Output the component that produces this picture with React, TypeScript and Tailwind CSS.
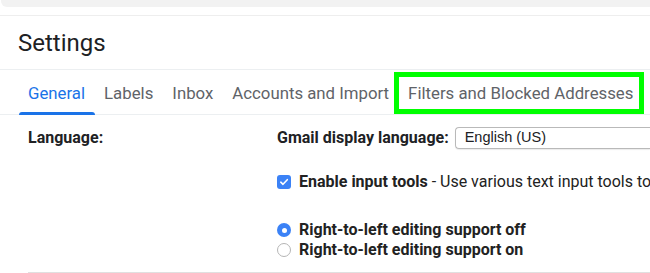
import React from "react";

export default function App() {
  const tabs = ["General", "Labels", "Inbox", "Accounts and Import"];
  return (
    <div className="w-[650px] h-[273px] overflow-hidden bg-white relative font-['Roboto',sans-serif] text-[#202124]">
      <div className="h-[7px] ml-[1px] bg-[#f2f2f2] rounded-bl-[6px]" />
      <div className="mt-[8px] border-t border-[#eeeeee]" />
      <div className="h-[53px] flex items-center pl-[18px] text-[24px] text-[#202124]">Settings</div>
      <div className="flex h-[46px] border-t border-b border-[#eceff1] pl-[18.5px] pt-[3px]">
        {tabs.map((t, i) => (
          <div
            key={t}
            className={
              "relative flex items-center px-[9.5px] text-[16.8px] " +
              (i === 0 ? "text-[#1a73e8]" : "text-[#5f6368]")
            }
          >
            {t}
            {i === 0 && (
              <div className="absolute left-0 right-0 bottom-[-1px] h-[3px] bg-[#1a73e8] rounded-t-[3px]" />
            )}
          </div>
        ))}
        <div className="relative flex items-center px-[9.5px] text-[16.8px] text-[#5f6368]">
          Filters and Blocked Addresses
          <div className="absolute left-[-5px] right-[-1.5px] top-[-1px] bottom-[0px] border-[5px] border-[#00ff00]" />
        </div>
      </div>
      <div className="flex mt-[12px]">
        <div className="w-[277px] shrink-0 pl-[28px] text-[16px] font-bold leading-[22px] text-[#202124]">Language:</div>
        <div className="flex-1 min-w-0 flex flex-col overflow-hidden">
          <div className="flex items-center h-[22px]">
            <span className="text-[16px] font-bold text-[#202124] mr-[6px] whitespace-nowrap">Gmail display language:</span>
            <div className="flex-1 h-[22px] border border-[#b9b9b9] rounded-l-[4px] border-r-0 shadow-[0_1px_1px_rgba(0,0,0,0.08)] flex items-center pl-[9px] font-['Liberation_Sans',sans-serif] text-[14.5px] text-[#202124] whitespace-nowrap">
              English (US)
            </div>
          </div>
          <div className="flex items-center h-[20px] mt-[23px] whitespace-nowrap">
            <div className="w-[14px] h-[14px] rounded-[3px] bg-[#3b82f6] flex items-center justify-center shrink-0">
              <svg width="10" height="10" viewBox="0 0 10 10">
                <path d="M1.8 5.2 L4 7.3 L8.3 2.7" fill="none" stroke="white" strokeWidth="1.6" strokeLinecap="round" strokeLinejoin="round" />
              </svg>
            </div>
            <span className="ml-[8px] text-[16px] text-[#222]">
              <b>Enable input tools</b> - Use various text input tools to
            </span>
          </div>
          <div className="flex items-center h-[19px] mt-[28.5px] whitespace-nowrap">
            <div className="w-[14px] h-[14px] rounded-full bg-[#3b82f6] flex items-center justify-center shrink-0">
              <div className="w-[5px] h-[5px] rounded-full bg-white" />
            </div>
            <span className="ml-[8px] text-[16px] font-bold text-[#222]">Right-to-left editing support off</span>
          </div>
          <div className="flex items-center h-[19px] mt-[0.5px] whitespace-nowrap">
            <div className="w-[14px] h-[14px] rounded-full border border-[#b5b5b5] bg-white shrink-0" />
            <span className="ml-[8px] text-[16px] font-bold text-[#222]">Right-to-left editing support on</span>
          </div>
        </div>
      </div>
      <div className="ml-[28px] mt-[13px] border-t border-[#e0e0e0]" />
    </div>
  );
}
